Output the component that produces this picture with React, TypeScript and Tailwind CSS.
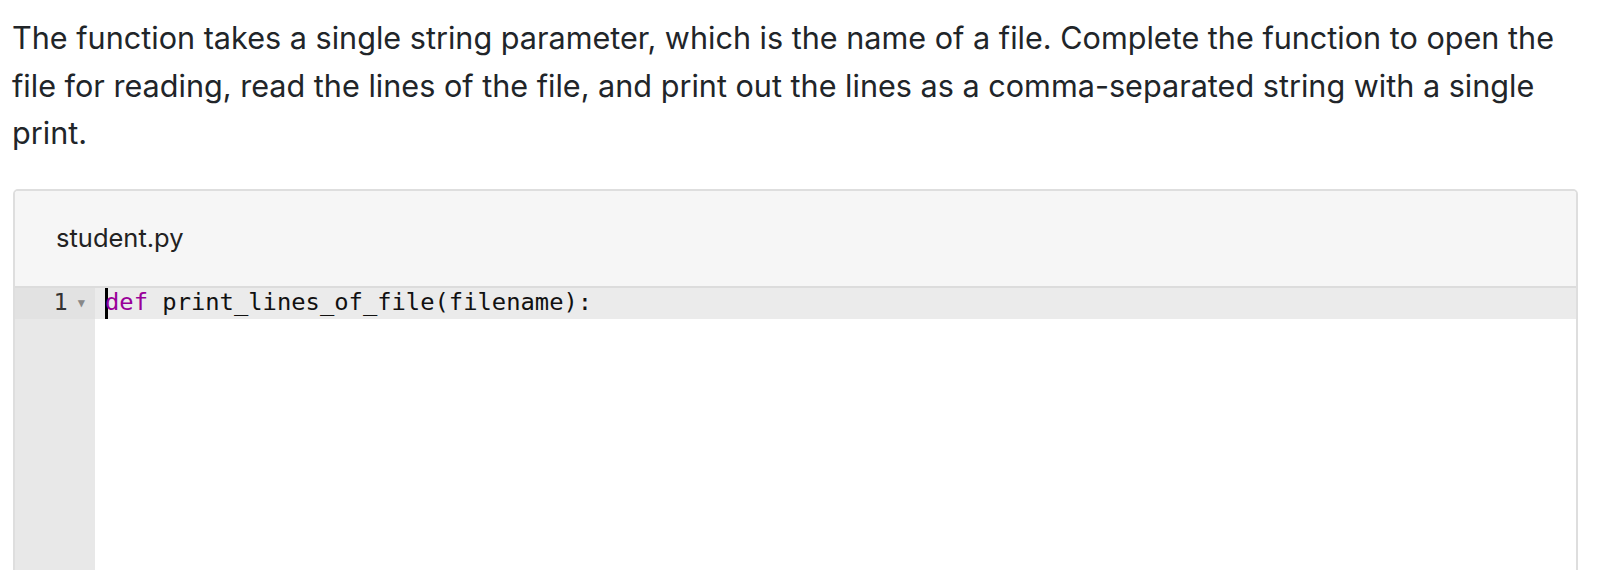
import React from 'react';

const App: React.FC = () => {
  return (
    <div className="w-[1600px] h-[570px] overflow-hidden bg-white text-[#212529]" style={{ fontFamily: 'Inter, "Noto Sans", sans-serif' }}>
      {/* Prompt */}
      <p className="ml-3 w-[1565px] pt-[14px] text-[30.6px] leading-[47.5px]">
        The function takes a single string parameter, which is the name of a file. Complete the function to open the
        file for reading, read the lines of the file, and print out the lines as a comma-separated string with a single
        print.
      </p>

      {/* Editor card */}
      <div className="ml-[13px] mt-[32px] w-[1565px] rounded-[5px] border-2 border-[#dedede] overflow-hidden">
        <div className="h-[97px] bg-[#f6f6f6] border-b-2 border-[#dcdcdc] flex items-center pl-[41px] text-[25.5px] text-[#222]">
          student.py
        </div>
        <div className="flex h-[400px]" style={{ fontFamily: '"DejaVu Sans Mono", "Liberation Mono", monospace' }}>
          {/* Gutter */}
          <div className="w-[80px] bg-[#e8e8e8] flex flex-col">
            <div className="h-[31px] bg-[#e2e2e2] flex items-center justify-end pr-[10px] text-[23.5px] text-[#333]">
              <span>1</span>
              <span className="ml-[10px] text-[12px] text-[#888]">▼</span>
            </div>
          </div>
          {/* Code */}
          <div className="flex-1 bg-white">
            <div className="h-[31px] bg-[#ebebeb] flex items-center pl-[10px] text-[23.8px] text-[#111] whitespace-pre">
              <span className="w-[3px] h-[31px] bg-black -mr-[3px]"></span>
              <span className="text-[#990099]">def</span>
              <span> print_lines_of_file(filename):</span>
            </div>
          </div>
        </div>
      </div>
    </div>
  );
};

export default App;
